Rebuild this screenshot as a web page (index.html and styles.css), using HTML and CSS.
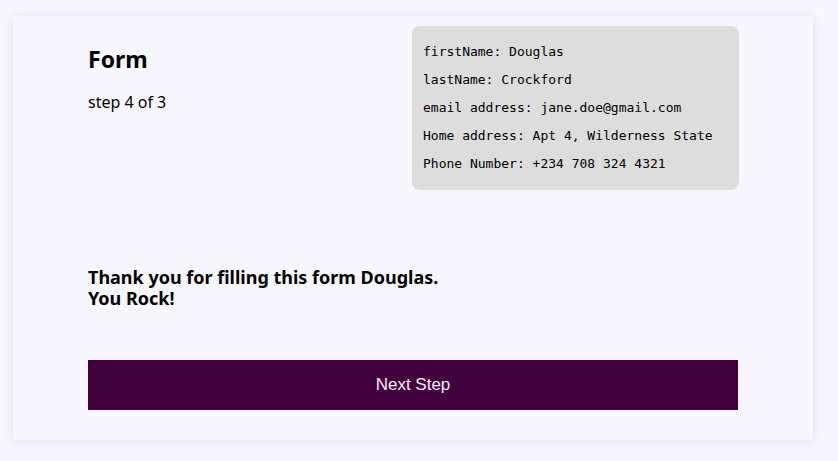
FILE: index.html
```html
<!DOCTYPE html>
<html>
<head>
<meta charset="utf-8">
<link rel="stylesheet" href="styles.css">
</head>
<body>
<div class="card">
  <div class="top">
    <div class="intro">
      <h2 class="title">Form</h2>
      <p class="step">step 4 of 3</p>
    </div>
    <div class="summary">
      <p>firstName: Douglas</p>
      <p>lastName: Crockford</p>
      <p>email address: jane.doe@gmail.com</p>
      <p>Home address: Apt 4, Wilderness State</p>
      <p>Phone Number: +234 708 324 4321</p>
    </div>
  </div>
  <h3 class="thanks">Thank you for filling this form Douglas.<br>You Rock!</h3>
  <button class="next">Next Step</button>
</div>
</body>
</html>
```
FILE: styles.css
```css
html, body {
  margin: 0;
  padding: 0;
  background: #f8f7ff;
}
body {
  min-height: 461px;
  box-sizing: border-box;
  padding: 16px 0 0 13px;
  font-family: "Noto Sans", sans-serif;
  color: #000;
}
.card {
  box-sizing: border-box;
  width: 800px;
  height: 424px;
  background: #f8f7ff;
  box-shadow: 0 1px 10px rgba(0, 0, 0, 0.1);
  padding: 10px 75px 0 75px;
  display: flex;
  flex-direction: column;
}
.top {
  display: flex;
  justify-content: space-between;
}
.intro {
  padding-top: 17px;
}
.title {
  margin: 0;
  font-size: 23px;
  font-weight: 700;
  line-height: 32px;
}
.step {
  margin: 16px 0 0 0;
  font-size: 16px;
  line-height: 22px;
}
.summary {
  box-sizing: border-box;
  width: 327px;
  margin-right: -1px;
  background: #dddddd;
  border-radius: 8px;
  padding: 12px 11px 12px 11px;
  font-family: "DejaVu Sans Mono", monospace;
  font-size: 13px;
}
.summary p {
  margin: 0;
  line-height: 28px;
}
.thanks {
  margin: 77px 0 0 0;
  font-size: 18px;
  font-weight: 700;
  line-height: 21px;
}
.next {
  margin-top: 51px;
  height: 50px;
  width: 100%;
  border: none;
  background: #42003f;
  color: #f4eef6;
  font-family: "Liberation Sans", Arial, sans-serif;
  font-size: 17px;
  cursor: pointer;
}
```
